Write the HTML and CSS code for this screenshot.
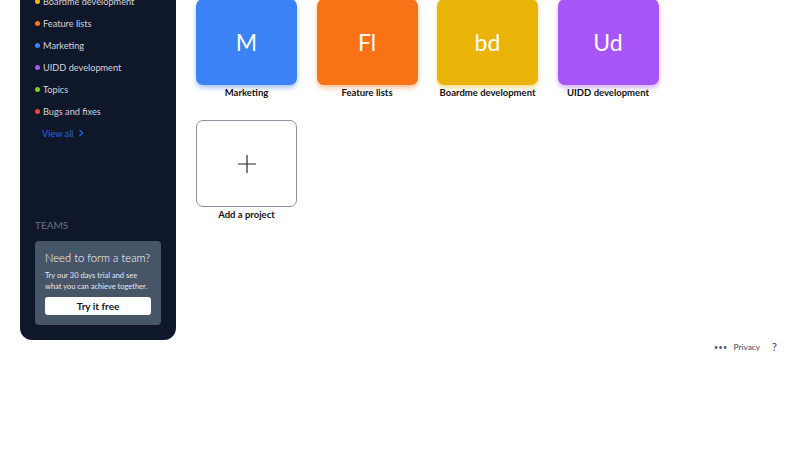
FILE: index.html
```html
<!DOCTYPE html>
<html lang="en">
  <head>
    <meta charset="UTF-8" />
    <meta name="viewport" content="width=device-width, initial-scale=1.0" />
    <title>Projects</title>
    <link rel="stylesheet" href="styles.css">
  </head>
  <body>
    <div class="page">
      <aside class="sidebar">
        <ul class="project-list">
          <li><span class="dot yellow"></span>Boardme development</li>
          <li><span class="dot orange"></span>Feature lists</li>
          <li><span class="dot blue"></span>Marketing</li>
          <li><span class="dot purple"></span>UIDD development</li>
          <li><span class="dot lime"></span>Topics</li>
          <li><span class="dot red"></span>Bugs and fixes</li>
          <li class="view-all">
            View all
            <svg width="8" height="8" viewBox="0 0 8 8"><path d="M2.5 1 L5.5 4 L2.5 7" fill="none" stroke="currentColor" stroke-width="1.2" /></svg>
          </li>
        </ul>

        <div class="teams-title">TEAMS</div>
        <div class="team-card">
          <div class="team-heading">Need to form a team?</div>
          <p>Try our 30 days trial and see what you can achieve together.</p>
          <button type="button">Try it free</button>
        </div>
      </aside>

      <main class="projects">
        <div class="project">
          <div class="tile bg-blue">M</div>
          <span>Marketing</span>
        </div>
        <div class="project">
          <div class="tile bg-orange">Fl</div>
          <span>Feature lists</span>
        </div>
        <div class="project">
          <div class="tile bg-yellow">bd</div>
          <span>Boardme development</span>
        </div>
        <div class="project">
          <div class="tile bg-purple">Ud</div>
          <span>UIDD development</span>
        </div>
        <div class="project">
          <div class="tile add">
            <svg width="20" height="20" viewBox="0 0 20 20"><path d="M10 1 V19 M1 10 H19" stroke="#1f2937" stroke-width="1.2" /></svg>
          </div>
          <span>Add a project</span>
        </div>
      </main>
    </div>

    <footer class="footer">
      <span class="more">&bull;&bull;&bull;</span>
      <span>Privacy</span>
      <span class="help">?</span>
    </footer>
  </body>
</html>
```

FILE: styles.css
```css
body {
  font-family: Lato, "Open Sans", Arial, sans-serif;
  background-color: #fff;
  margin: 0;
  color: #111827;
}
.page {
  display: flex;
  gap: 20px;
  padding: 0 20px;
  margin-top: -10px;
}
.sidebar {
  width: 156px;
  box-sizing: border-box;
  background-color: #0f172a;
  border-radius: 0 0 12px 12px;
  padding: 0 15px 15px;
}
.project-list {
  list-style: none;
  margin: 0;
  padding: 0;
}
.project-list li {
  display: flex;
  align-items: center;
  height: 22px;
  font-size: 9.2px;
  color: #d1d5db;
}
.dot {
  width: 5px;
  height: 5px;
  border-radius: 50%;
  margin-right: 3px;
}
.yellow { background: #eab308; }
.orange { background: #f97316; }
.blue { background: #3b82f6; }
.purple { background: #a855f7; }
.lime { background: #84cc16; }
.red { background: #ef4444; }
.project-list .view-all {
  color: #2563eb;
  padding-left: 7px;
  gap: 3px;
}
.teams-title {
  margin-top: 74px;
  font-size: 10px;
  line-height: 14px;
  color: #6b7280;
}
.team-card {
  margin-top: 9px;
  background-color: #475569;
  border-radius: 4px;
  padding: 9px 10px 10px;
}
.team-heading {
  color: #fff;
  font-size: 11.2px;
  font-weight: 300;
  line-height: 16px;
  white-space: nowrap;
}
.team-card p {
  margin: 4px 0 5px;
  color: #e2e8f0;
  font-size: 7.5px;
  line-height: 11px;
}
.team-card button {
  display: block;
  width: 100%;
  height: 18px;
  padding: 0;
  border: none;
  border-radius: 3px;
  background: #fff;
  color: #111827;
  font-family: inherit;
  font-size: 10px;
  font-weight: bold;
}
.projects {
  display: grid;
  grid-template-columns: repeat(4, 101px);
  column-gap: 19.5px;
  row-gap: 19px;
  align-content: start;
  padding-top: 9px;
}
.project {
  display: flex;
  flex-direction: column;
  align-items: center;
}
.project span {
  font-size: 9.5px;
  font-weight: bold;
  line-height: 16px;
  color: #111;
  white-space: nowrap;
}
.tile {
  width: 101px;
  height: 86px;
  border-radius: 7px;
  display: flex;
  align-items: center;
  justify-content: center;
  color: #fff;
  font-size: 23px;
}
.bg-blue { background: #3b82f6; box-shadow: 0 3px 5px rgba(59, 130, 246, 0.45); }
.bg-orange { background: #f97316; box-shadow: 0 3px 5px rgba(249, 115, 22, 0.45); }
.bg-yellow { background: #eab308; box-shadow: 0 3px 5px rgba(234, 179, 8, 0.45); }
.bg-purple { background: #a855f7; box-shadow: 0 3px 5px rgba(168, 85, 247, 0.45); }
.tile.add {
  height: 87px;
  box-sizing: border-box;
  border: 1px solid #8b8fa8;
  background: #fff;
}
.footer {
  display: flex;
  justify-content: flex-end;
  align-items: center;
  gap: 6px;
  padding: 1px 23px 0 0;
  font-size: 8.3px;
  line-height: 12px;
  color: #374151;
}
.footer .more {
  font-size: 7px;
  letter-spacing: 0.5px;
  color: #4b5563;
}
.footer .help {
  margin-left: 6px;
  font-size: 11px;
}
```
